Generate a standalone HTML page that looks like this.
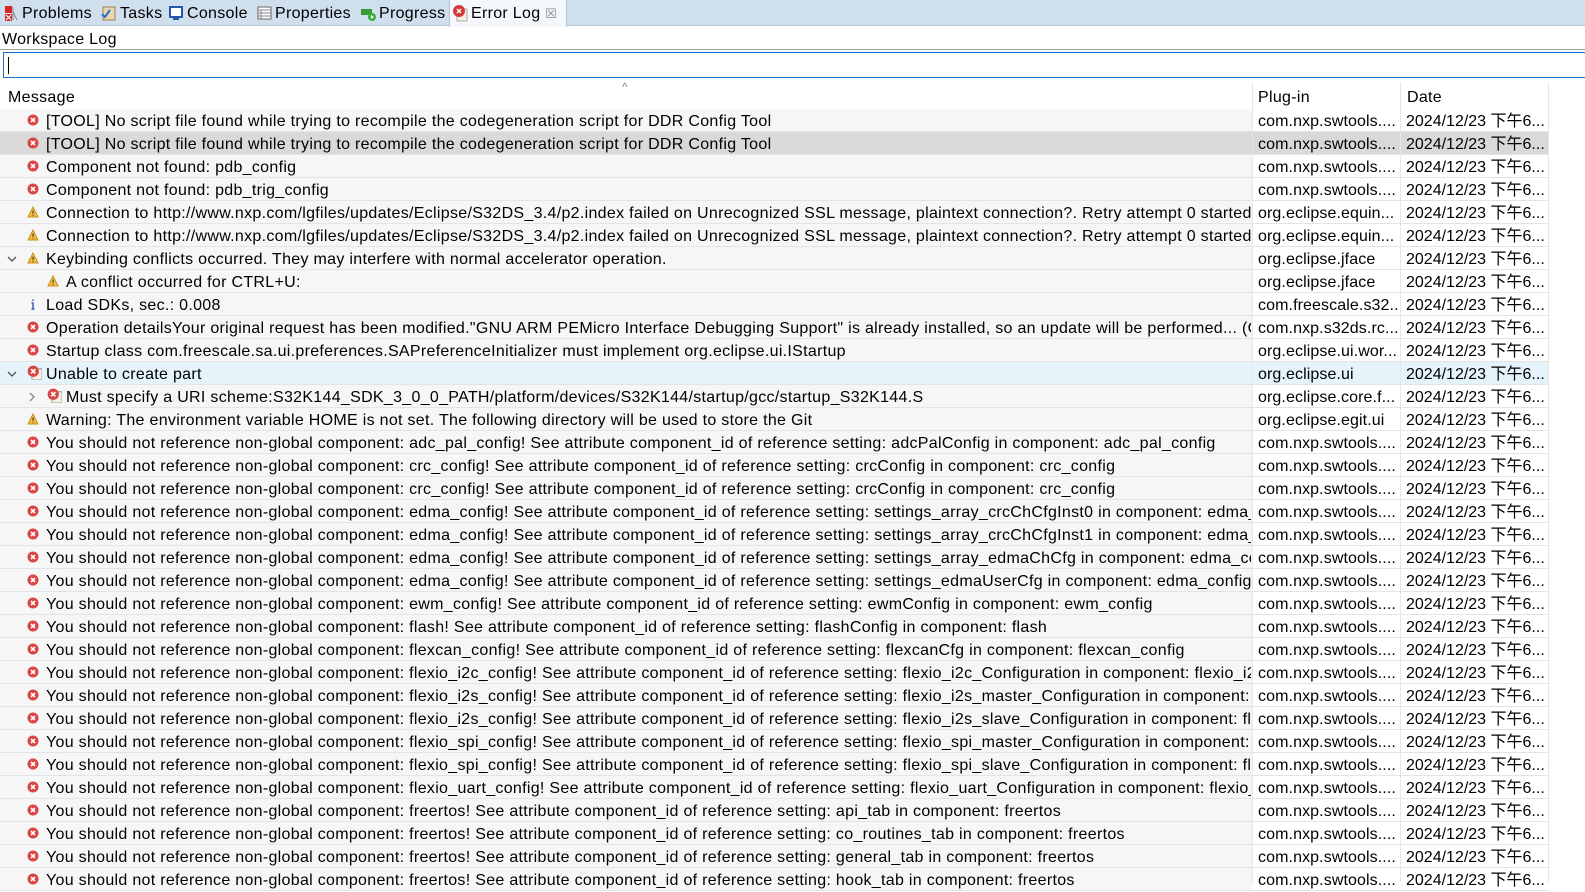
<!DOCTYPE html>
<html><head><meta charset="utf-8"><style>
*{margin:0;padding:0;box-sizing:border-box}
body{width:1585px;height:882px;overflow:hidden;background:#fff;font-family:"Liberation Sans","Noto Sans CJK SC",sans-serif;font-size:16px;color:#000;position:relative;letter-spacing:0.3px}
.tabs{position:absolute;left:0;top:0;width:1585px;height:26px;background:#d0dfee;border-bottom:1px solid #b8c4d4}
.tab{position:absolute;top:0;height:26px;line-height:27px;white-space:nowrap}
.tab.act{background:#f4f7fb;border-left:1px solid #b8c4d4;border-right:1px solid #b8c4d4;height:27px}
.ws{position:absolute;left:2px;top:30px;line-height:20px}
.sep{position:absolute;left:0;top:49px;width:1585px;height:1px;background:#a0a0a0}
.inp{position:absolute;left:3px;top:52px;width:1590px;height:26px;border:1px solid #1a73c9}
.caret{position:absolute;left:4px;top:4px;width:1px;height:17px;background:#000}
.hdr{position:absolute;top:85px;height:25px;line-height:25px}
.vl{position:absolute;top:82px;width:1px;height:800px;background:#e6e6e6}
.row{position:absolute;left:0;width:1549px;height:23px;border-bottom:1px solid #e4e4e4}
.row .m{position:absolute;left:0;top:0;width:1252px;height:22px;background:#f6f6f6}
.row.sel .m,.row.sel{background:#d9d9d9}
.row.hl .m,.row.hl{background:#e5f3fb}
.t{position:absolute;top:1px;line-height:23px;white-space:nowrap;overflow:hidden}
.ic{position:absolute;top:5px;width:12px;height:12px}
</style></head><body>
<div class="tabs">
 <div class="tab" style="left:3px"><svg width="19" height="18" style="vertical-align:-4px"><rect x="2" y="2" width="7" height="7" fill="#d22"/><rect x="2" y="10" width="7" height="7" fill="#c33"/><path d="M3 11l5 5M8 11l-5 5" stroke="#fff"/><path d="M10 3v13M10 8l4 8" stroke="#888"/></svg>Problems</div>
 <div class="tab" style="left:100px"><svg width="20" height="18" style="vertical-align:-4px"><rect x="3" y="3" width="12" height="13" fill="#e8d8b0" stroke="#a08050"/><path d="M2 10l3 3 5-7" stroke="#2a6fd0" stroke-width="2" fill="none"/></svg>Tasks</div>
 <div class="tab" style="left:168px"><svg width="19" height="18" style="vertical-align:-4px"><rect x="2" y="3" width="12" height="10" fill="#fff" stroke="#2458a8" stroke-width="2"/><rect x="5" y="14" width="6" height="2" fill="#2458a8"/></svg>Console</div>
 <div class="tab" style="left:256px"><svg width="19" height="18" style="vertical-align:-4px"><rect x="2" y="3" width="13" height="12" fill="#fff" stroke="#666"/><path d="M2 6h13M5 6v9M2 9h13M2 12h13" stroke="#888"/></svg>Properties</div>
 <div class="tab" style="left:360px"><svg width="19" height="18" style="vertical-align:-4px"><rect x="1" y="5" width="11" height="6" fill="#3a9a3a"/><circle cx="12" cy="13" r="4" fill="#3ab03a"/><path d="M11 11l3 2-3 2z" fill="#fff"/></svg>Progress</div>
 <div class="tab act" style="left:449px;width:118px;padding-left:2px"><svg width="19" height="18" style="vertical-align:-4px"><rect x="5" y="5" width="10" height="12" fill="#f5f0e0" stroke="#aaa"/><circle cx="7" cy="7" r="6" fill="#d43a3a"/><path d="M5 5l4 4M9 5l-4 4" stroke="#fff" stroke-width="1.5"/></svg>Error Log <span style="color:#888;font-size:13px">&#x2612;</span></div>
</div>
<div class="ws">Workspace Log</div>
<div class="sep"></div>
<div class="inp"><div class="caret"></div></div>
<div class="hdr" style="left:8px">Message</div>
<div style="position:absolute;left:622px;top:80px;color:#888;font-size:12px">^</div>
<div class="hdr" style="left:1258px">Plug-in</div>
<div class="hdr" style="left:1407px">Date</div>
<div id="rows"></div>
<div class="vl" style="left:1252px"></div>
<div class="vl" style="left:1400px"></div>
<div class="vl" style="left:1548px"></div>
<script>
var E='<svg class="ic" viewBox="0 0 12 12"><circle cx="6" cy="6" r="5.5" fill="#d94444"/><path d="M4 4l4 4M8 4l-4 4" stroke="#fff" stroke-width="1.6"/></svg>';
var W='<svg class="ic" viewBox="0 0 12 12"><path d="M6 1l5 10H1z" fill="#f2c040" stroke="#c89020"/><path d="M6 4.5v3.5M6 9v1" stroke="#543" stroke-width="1.2"/></svg>';
var I='<svg class="ic" viewBox="0 0 12 12"><path d="M6 1.5v1.5M6 5v6M4.5 5h2M4.5 11h3" stroke="#3a5fb0" stroke-width="1.5"/></svg>';
var S='<svg class="ic" viewBox="0 0 12 12"><rect x="4" y="3" width="8" height="9" fill="#f5f0e0" stroke="#aaa"/><circle cx="5" cy="5" r="4.5" fill="#d94444"/><path d="M3.3 3.3l3.4 3.4M6.7 3.3l-3.4 3.4" stroke="#fff" stroke-width="1.3"/></svg>';
var N='You should not reference non-global component: ';
var sw='com.nxp.swtools....';
var R=[
[E,0,'','[TOOL] No script file found while trying to recompile the codegeneration script for DDR Config Tool',sw],
[E,0,'','[TOOL] No script file found while trying to recompile the codegeneration script for DDR Config Tool',sw,'sel'],
[E,0,'','Component not found: pdb_config',sw],
[E,0,'','Component not found: pdb_trig_config',sw],
[W,0,'','Connection to http://www.nxp.com/lgfiles/updates/Eclipse/S32DS_3.4/p2.index failed on Unrecognized SSL message, plaintext connection?. Retry attempt 0 started','org.eclipse.equin...'],
[W,0,'','Connection to http://www.nxp.com/lgfiles/updates/Eclipse/S32DS_3.4/p2.index failed on Unrecognized SSL message, plaintext connection?. Retry attempt 0 started','org.eclipse.equin...'],
[W,0,'v','Keybinding conflicts occurred.  They may interfere with normal accelerator operation.','org.eclipse.jface'],
[W,1,'','A conflict occurred for CTRL+U:','org.eclipse.jface'],
[I,0,'','Load SDKs, sec.: 0.008','com.freescale.s32...'],
[E,0,'','Operation detailsYour original request has been modified."GNU ARM PEMicro Interface Debugging Support" is already installed, so an update will be performed... (Operation','com.nxp.s32ds.rc...'],
[E,0,'','Startup class com.freescale.sa.ui.preferences.SAPreferenceInitializer must implement org.eclipse.ui.IStartup','org.eclipse.ui.wor...'],
[S,0,'v','Unable to create part','org.eclipse.ui','hl'],
[S,1,'>','Must specify a URI scheme:S32K144_SDK_3_0_0_PATH/platform/devices/S32K144/startup/gcc/startup_S32K144.S','org.eclipse.core.f...'],
[W,0,'','Warning: The environment variable HOME is not set. The following directory will be used to store the Git','org.eclipse.egit.ui'],
[E,0,'',N+'adc_pal_config! See attribute component_id of reference setting: adcPalConfig in component: adc_pal_config',sw],
[E,0,'',N+'crc_config! See attribute component_id of reference setting: crcConfig in component: crc_config',sw],
[E,0,'',N+'crc_config! See attribute component_id of reference setting: crcConfig in component: crc_config',sw],
[E,0,'',N+'edma_config! See attribute component_id of reference setting: settings_array_crcChCfgInst0 in component: edma_config',sw],
[E,0,'',N+'edma_config! See attribute component_id of reference setting: settings_array_crcChCfgInst1 in component: edma_config',sw],
[E,0,'',N+'edma_config! See attribute component_id of reference setting: settings_array_edmaChCfg in component: edma_config',sw],
[E,0,'',N+'edma_config! See attribute component_id of reference setting: settings_edmaUserCfg in component: edma_config',sw],
[E,0,'',N+'ewm_config! See attribute component_id of reference setting: ewmConfig in component: ewm_config',sw],
[E,0,'',N+'flash! See attribute component_id of reference setting: flashConfig in component: flash',sw],
[E,0,'',N+'flexcan_config! See attribute component_id of reference setting: flexcanCfg in component: flexcan_config',sw],
[E,0,'',N+'flexio_i2c_config! See attribute component_id of reference setting: flexio_i2c_Configuration in component: flexio_i2c_config',sw],
[E,0,'',N+'flexio_i2s_config! See attribute component_id of reference setting: flexio_i2s_master_Configuration in component: flexio_i2s_config',sw],
[E,0,'',N+'flexio_i2s_config! See attribute component_id of reference setting: flexio_i2s_slave_Configuration in component: flexio_i2s_config',sw],
[E,0,'',N+'flexio_spi_config! See attribute component_id of reference setting: flexio_spi_master_Configuration in component: flexio_spi_config',sw],
[E,0,'',N+'flexio_spi_config! See attribute component_id of reference setting: flexio_spi_slave_Configuration in component: flexio_spi_config',sw],
[E,0,'',N+'flexio_uart_config! See attribute component_id of reference setting: flexio_uart_Configuration in component: flexio_uart_config',sw],
[E,0,'',N+'freertos! See attribute component_id of reference setting: api_tab in component: freertos',sw],
[E,0,'',N+'freertos! See attribute component_id of reference setting: co_routines_tab in component: freertos',sw],
[E,0,'',N+'freertos! See attribute component_id of reference setting: general_tab in component: freertos',sw],
[E,0,'',N+'freertos! See attribute component_id of reference setting: hook_tab in component: freertos',sw]
];
var h='';
R.forEach(function(r,i){
 var top=109+i*23, ind=r[1]?20:0;
 var st='left:'+(27+ind)+'px;'+(r[0]==S?'width:15px;height:15px;top:3px':'');
 var ic=r[0].replace('<svg class="ic" ','<svg class="ic" style="'+st+'" ');
 var tw='';
 if(r[2]=='v') tw='<svg style="position:absolute;left:7px;top:9px" width="10" height="7"><path d="M1 1l4 4 4-4" stroke="#555" stroke-width="1.3" fill="none"/></svg>';
 if(r[2]=='>') tw='<svg style="position:absolute;left:29px;top:7px" width="7" height="10"><path d="M1 1l4 4-4 4" stroke="#888" stroke-width="1.3" fill="none"/></svg>';
 h+='<div class="row '+(r[5]||'')+'" style="top:'+top+'px"><div class="m"></div>'+tw+ic+
 '<div class="t" style="left:'+(46+ind)+'px;width:'+(1205-ind)+'px">'+r[3]+'</div>'+
 '<div class="t" style="left:1258px;width:140px;letter-spacing:0.1px">'+r[4]+'</div>'+
 '<div class="t" style="left:1406px;width:140px;letter-spacing:0">2024/12/23 下午6...</div></div>';
});
document.getElementById('rows').innerHTML=h;
</script>
</body></html>
